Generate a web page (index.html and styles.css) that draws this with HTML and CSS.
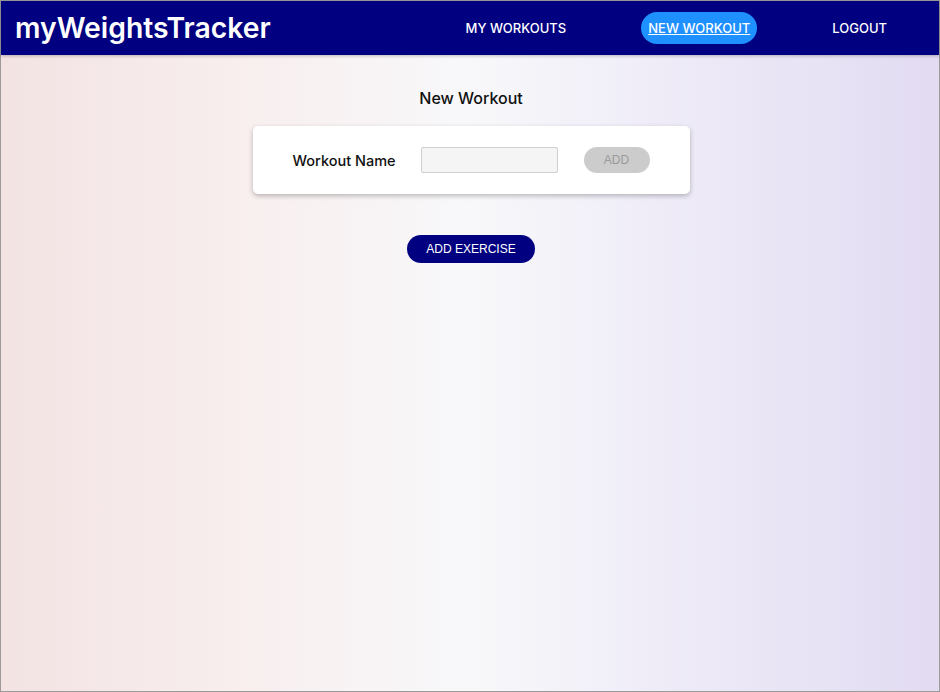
FILE: index.html
```
<!DOCTYPE html>
<html>
<head>
<meta charset="utf-8">
<link rel="stylesheet" href="styles.css">
</head>
<body>
<div class="frame">
  <header class="topbar">
    <div class="logo">myWeightsTracker</div>
    <nav class="nav">
      <a class="nav-link">MY WORKOUTS</a>
      <a class="nav-link active">NEW WORKOUT</a>
      <a class="nav-link">LOGOUT</a>
    </nav>
  </header>
  <main class="content">
    <h1 class="title">New Workout</h1>
    <div class="card">
      <label class="label">Workout Name</label>
      <input class="name-input" type="text">
      <button class="add-btn">ADD</button>
    </div>
    <button class="exercise-btn">ADD EXERCISE</button>
  </main>
</div>
</body>
</html>
```
FILE: styles.css
```
html, body {
  margin: 0;
  padding: 0;
}
.frame {
  width: 940px;
  height: 692px;
  box-sizing: border-box;
  border: 1px solid #9a9a9a;
  display: flex;
  flex-direction: column;
  background: linear-gradient(90deg, #f3e3e3 0%, #f8eeee 25%, #f8f8fa 50%, #efecf8 70%, #e2dbf2 100%);
  font-family: Inter, "Open Sans", sans-serif;
}
.topbar {
  height: 54px;
  background: #000080;
  display: flex;
  align-items: center;
  justify-content: space-between;
  padding: 0 0 0 14px;
  box-shadow: 0 1px 3px rgba(0,0,0,0.25);
}
.logo {
  color: #fff;
  font-size: 28.3px;
  font-weight: 600;
}
.nav {
  display: flex;
  align-items: center;
  margin-right: 45px;
}
.nav-link {
  color: #fff;
  font-size: 13px;
  font-weight: 500;
  padding: 7px 7px;
  border-radius: 16px;
  margin-left: 68px;
  line-height: 18px;
}
.nav-link.active {
  background: #1e90ff;
  text-decoration: underline;
}
.content {
  display: flex;
  flex-direction: column;
  align-items: center;
  padding-left: 2px;
}
.title {
  margin: 33px 0 18px;
  font-size: 16px;
  font-weight: 500;
  color: #111;
}
.card {
  width: 437px;
  height: 68px;
  box-sizing: border-box;
  background: #fff;
  border-radius: 5px;
  box-shadow: 0 2px 5px rgba(0,0,0,0.25);
  display: flex;
  align-items: center;
  padding-left: 40px;
}
.label {
  font-size: 14.5px;
  font-weight: 500;
  color: #111;
  width: 128px;
}
.name-input {
  width: 137px;
  height: 26px;
  box-sizing: border-box;
  background: #f5f5f5;
  border: 1px solid #cfcfcf;
  border-radius: 2px;
  margin: 0;
  padding: 0;
}
.add-btn {
  margin-left: 26px;
  width: 66px;
  height: 26px;
  border: none;
  border-radius: 13px;
  background: #cccccc;
  color: #9a9a9a;
  font-family: "Liberation Sans", Arial, sans-serif;
  font-size: 12px;
}
.exercise-btn {
  margin-top: 41px;
  width: 128px;
  height: 28px;
  border: none;
  border-radius: 14px;
  background: #000080;
  color: #fff;
  font-family: "Liberation Sans", Arial, sans-serif;
  font-size: 12px;
}
```
